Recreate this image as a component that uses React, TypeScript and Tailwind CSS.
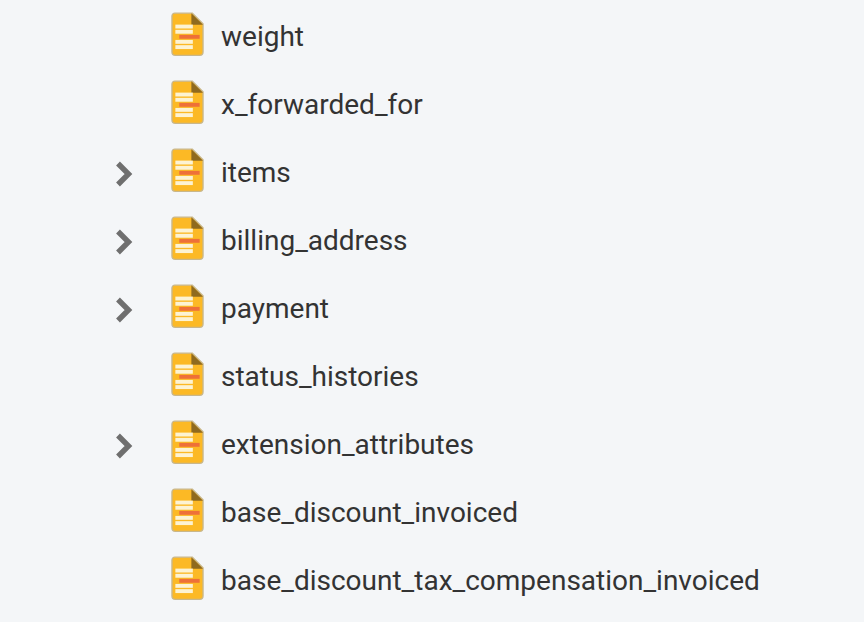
const rows = [
  { name: 'weight' },
  { name: 'x_forwarded_for' },
  { name: 'items', expandable: true },
  { name: 'billing_address', expandable: true },
  { name: 'payment', expandable: true },
  { name: 'status_histories' },
  { name: 'extension_attributes', expandable: true },
  { name: 'base_discount_invoiced' },
  { name: 'base_discount_tax_compensation_invoiced' },
];

function Chevron() {
  return (
    <svg width="20" height="28" viewBox="0 0 20 28" fill="none" className="blur-[0.4px]">
      <path d="M4 3.5 L14.5 14 L4 24.5" stroke="#6f6f6f" strokeWidth="5.4" />
    </svg>
  );
}

function FileIcon() {
  return (
    <svg width="33" height="45" viewBox="0 0 34 46" className="blur-[0.5px] mt-[1px]">
      <path d="M4 1 H22 L33 12 V41 a3.5 3.5 0 0 1 -3.5 3.5 H4.5 A3.5 3.5 0 0 1 1 41 V4 A3 3 0 0 1 4 1 Z" fill="#fcb925" stroke="#c9b78a" strokeWidth="1.4" />
      <path d="M21 1 L33 13 H21 Z" fill="#8f6a1f" />
      <rect x="4.5" y="12.8" width="18" height="4" fill="#fdf3d3" />
      <rect x="4.5" y="18.2" width="18" height="4" fill="#fdf3d3" />
      <rect x="8.5" y="23.4" width="21" height="4" fill="#ee7038" />
      <rect x="4.5" y="28.6" width="18" height="4" fill="#fdf3d3" />
      <rect x="4.5" y="34" width="18" height="4" fill="#fdf3d3" />
    </svg>
  );
}

export default function App() {
  return (
    <div className="w-[864px] h-[622px] overflow-hidden bg-[#f4f6f8] font-['Roboto',sans-serif]">
      {rows.map((row) => (
        <div key={row.name} className="flex items-center h-[68px]">
          <div className="w-[114px] shrink-0" />
          <div className="w-[20px] flex justify-center shrink-0 pt-[8px]">
            {row.expandable && <Chevron />}
          </div>
          <div className="w-[37px] shrink-0" />
          <FileIcon />
          <span className="ml-[17px] pt-[5px] text-[28px] text-[#333333] leading-none whitespace-nowrap">{row.name}</span>
        </div>
      ))}
    </div>
  );
}
